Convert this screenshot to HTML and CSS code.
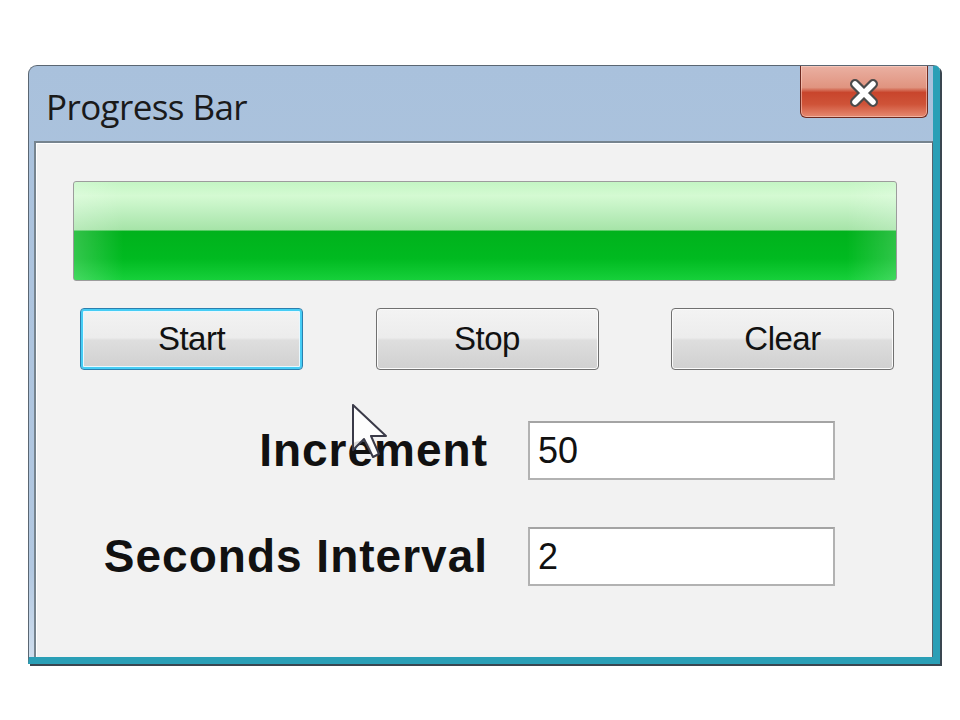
FILE: index.html
```html
<!DOCTYPE html>
<html>
<head>
<meta charset="utf-8">
<title>Progress Bar</title>
<link rel="stylesheet" href="styles.css">
</head>
<body>
<div class="window">
  <div class="titlebar">
    <div class="title">Progress Bar</div>
    <div class="close">
      <svg width="34" height="28" viewBox="0 0 34 28">
        <path d="M8 5 L26 23 M26 5 L8 23" stroke="#4b4b4b" stroke-width="10" stroke-linecap="round" fill="none"/>
        <path d="M8 5 L26 23 M26 5 L8 23" stroke="#ffffff" stroke-width="5.5" stroke-linecap="round" fill="none"/>
      </svg>
    </div>
  </div>
  <div class="client">
    <div class="progress"><div class="glow"></div></div>
    <div class="buttons">
      <div class="btn focused">Start</div>
      <div class="btn">Stop</div>
      <div class="btn">Clear</div>
    </div>
    <div class="form">
      <div class="label">Increment</div>
      <div class="textbox">50</div>
      <div class="label">Seconds Interval</div>
      <div class="textbox">2</div>
    </div>
  </div>
</div>
<svg class="cursor" width="38" height="56" viewBox="0 0 38 56">
  <path d="M1 1 L1 46 L12 35 L21 53 L27 50 L19 32 L34 32 Z" fill="rgba(255,255,255,0.85)" stroke="#3a3a48" stroke-width="2" stroke-linejoin="round"/>
</svg>
</body>
</html>
```
FILE: styles.css
```css
html, body {
  margin: 0;
  padding: 0;
  background: #ffffff;
}
body {
  width: 960px;
  height: 720px;
  overflow: hidden;
}
.window {
  margin: 65px 0 0 28px;
  width: 912px;
  height: 599px;
  box-sizing: border-box;
  border-left: 1px solid #5a6672;
  border-top: 1px solid #5a6672;
  border-right: 7px solid #2a9fb6;
  border-bottom: 7px solid #2a9fb6;
  border-radius: 9px 6px 0 0;
  box-shadow: 2px 2px 0 #3a4650;
  background: linear-gradient(#a9c1dc, #b2c8e1 85%, #cfdeee);
  padding-left: 5px;
  display: flex;
  flex-direction: column;
}
.titlebar {
  height: 75px;
  display: flex;
  justify-content: space-between;
  align-items: flex-start;
}
.title {
  font-family: "Open Sans", "DejaVu Sans", sans-serif;
  font-size: 35px;
  line-height: 34px;
  letter-spacing: -0.6px;
  color: #1a1a1a;
  padding: 24px 0 0 12px;
}
.close {
  width: 128px;
  height: 52px;
  margin-right: 5px;
  box-sizing: border-box;
  border: 1px solid #6e2a20;
  border-top: none;
  border-radius: 0 0 6px 6px;
  background: linear-gradient(#eab0a2 0%, #e09480 42%, #c8452c 52%, #cf5338 75%, #e68a72 100%);
  box-shadow: inset 0 0 0 1px rgba(255,220,210,0.5);
  display: flex;
  align-items: center;
  justify-content: center;
  padding-top: 2px;
}
.client {
  flex: 1;
  box-sizing: border-box;
  background: #f2f2f2;
  border-left: 2px solid #76848f;
  border-top: 2px solid #76848f;
  border-right: 1px solid #56646e;
  box-shadow: inset 1px 1px 0 #ffffff;
  display: flex;
  flex-direction: column;
}
.progress {
  margin: 38px 0 0 37px;
  width: 824px;
  height: 100px;
  box-sizing: border-box;
  border: 1px solid #9c9c9c;
  border-radius: 3px;
  background: linear-gradient(#c4f6c4 0%, #d4fad2 14%, #bff0c0 30%, #a6e4a8 49%, #00b21c 50%, #00ba20 78%, #16d03a 100%);
  overflow: hidden;
}
.glow {
  height: 100%;
  background: linear-gradient(to right, rgba(255,255,255,0.2), rgba(255,255,255,0) 6%, rgba(255,255,255,0) 94%, rgba(255,255,255,0.18));
}
.buttons {
  margin: 27px 0 0 44px;
  width: 814px;
  display: flex;
  justify-content: space-between;
}
.btn {
  width: 223px;
  height: 62px;
  box-sizing: border-box;
  border: 1px solid #707070;
  border-radius: 4px;
  background: linear-gradient(#f3f3f3 0%, #ececec 48%, #dedede 52%, #d0d0d0 100%);
  box-shadow: inset 0 0 0 1px #fbfbfb;
  display: flex;
  align-items: center;
  justify-content: center;
  font-family: "Liberation Sans", Arial, sans-serif;
  font-size: 33px;
  letter-spacing: -0.5px;
  color: #111;
}
.btn.focused {
  border-color: #2b7fae;
  box-shadow: inset 0 0 0 2px #46cdf5, inset 0 0 0 3px #e8f8ff;
}
.form {
  margin-top: 51px;
  display: grid;
  grid-template-columns: 452px 307px;
  column-gap: 40px;
  row-gap: 47px;
  align-items: center;
}
.label {
  text-align: right;
  font-family: "Liberation Sans", Arial, sans-serif;
  font-weight: bold;
  font-size: 46px;
  letter-spacing: 1px;
  color: #111;
  line-height: 59px;
}
.textbox {
  height: 59px;
  box-sizing: border-box;
  border: 2px solid #b2b2b2;
  border-top-color: #a4a4a4;
  background: #ffffff;
  padding-left: 8px;
  display: flex;
  align-items: center;
  font-family: "Liberation Sans", Arial, sans-serif;
  font-size: 36px;
  color: #111;
}
.cursor {
  position: absolute;
  left: 352px;
  top: 404px;
}
```
